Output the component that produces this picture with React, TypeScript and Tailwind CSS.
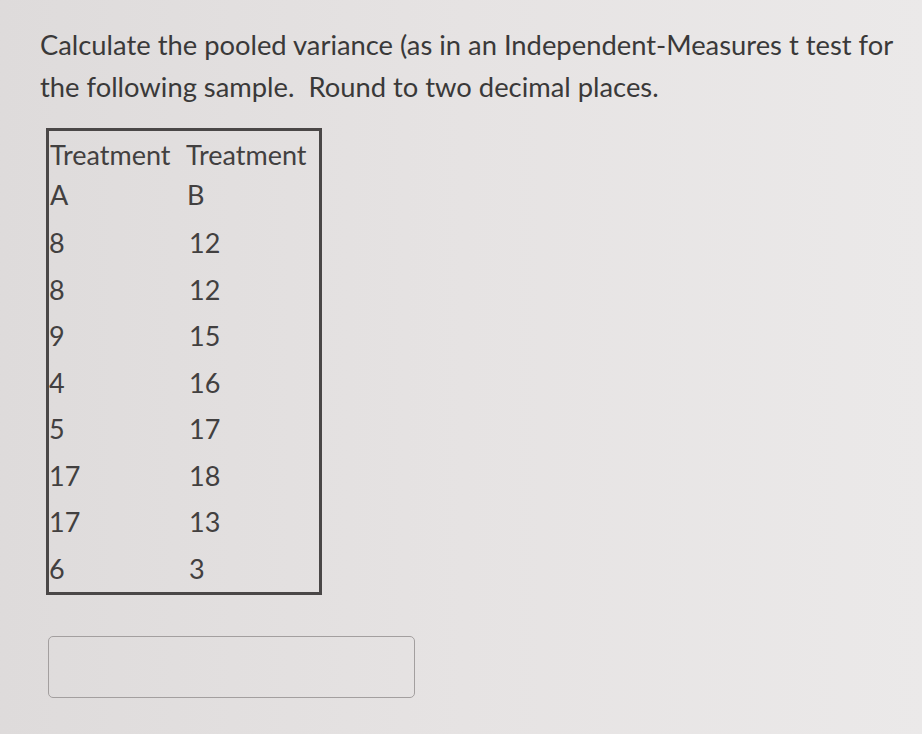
export default function App() {
  const rows: [string, string][] = [
    ['8', '12'],
    ['8', '12'],
    ['9', '15'],
    ['4', '16'],
    ['5', '17'],
    ['17', '18'],
    ['17', '13'],
    ['6', '3'],
  ]

  return (
    <div
      className="w-[922px] h-[734px] overflow-hidden bg-gradient-to-r from-[#dedbdb] via-[#e6e3e3] to-[#ebe9e9] text-[#3a3939]"
      style={{ fontFamily: 'Lato, "Open Sans", sans-serif' }}
    >
      <div className="pl-[40px] pt-[24px]">
        {/* Question */}
        <p className="text-[27.35px] leading-[42px] w-[870px]">
          Calculate the pooled variance (as in an Independent-Measures t test for the following sample.&nbsp; Round to two decimal places.
        </p>

        {/* Data table */}
        <div className="ml-[6px] mt-[20px] w-[276px] border-[3px] border-[#4a4747] text-[27px] text-[#424040]">
          <div className="grid grid-cols-[137px_1fr] pt-[4px] pb-[5px] leading-[40px]">
            <div className="pl-[1px]">
              Treatment
              <br />A
            </div>
            <div>
              Treatment
              <br />
              <span className="pl-[1px]">B</span>
            </div>
          </div>
          {rows.map(([a, b], i) => (
            <div key={i} className="grid grid-cols-[137px_1fr] h-[46.5px] items-center">
              <div>{a}</div>
              <div className="pl-[3px]">{b}</div>
            </div>
          ))}
        </div>

        {/* Answer box */}
        <div className="ml-[8px] mt-[41px] w-[367px] h-[62px] rounded-[5px] border border-[#a39f9f]" />
      </div>
    </div>
  )
}
